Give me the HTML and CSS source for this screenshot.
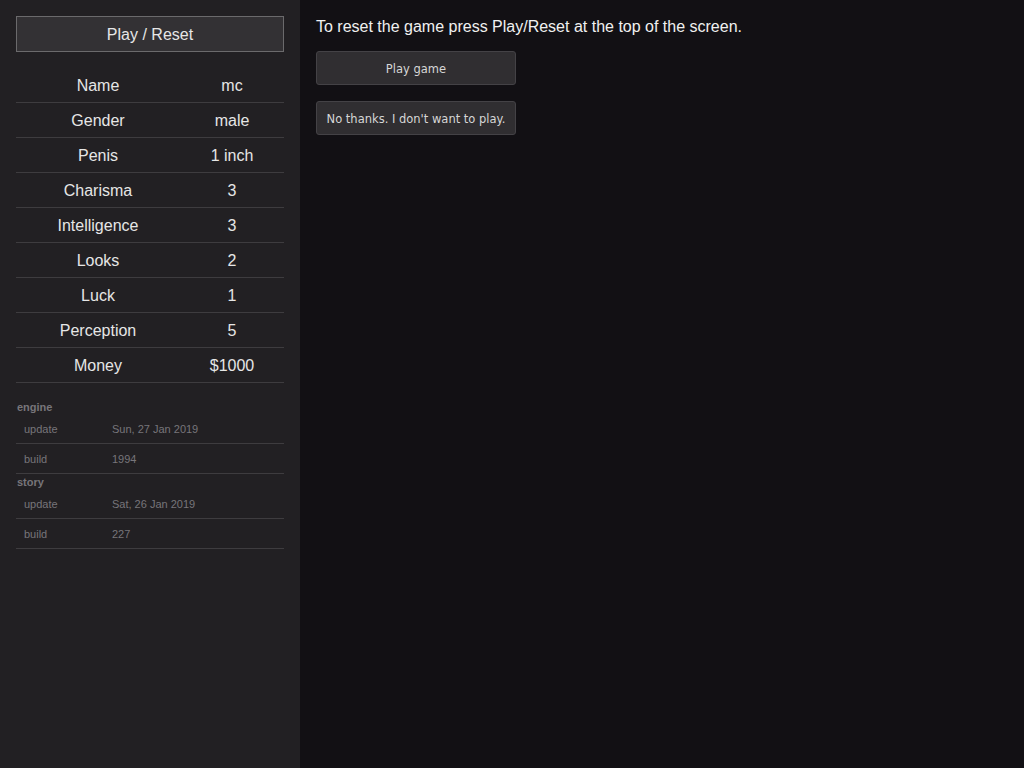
FILE: index.html
```html
<!DOCTYPE html>
<html>
<head>
<meta charset="utf-8">
<link rel="stylesheet" href="styles.css">
</head>
<body>
<div class="layout">
  <aside class="sidebar">
    <button class="reset-btn">Play / Reset</button>
    <table class="stats">
      <tr><td>Name</td><td>mc</td></tr>
      <tr><td>Gender</td><td>male</td></tr>
      <tr><td>Penis</td><td>1 inch</td></tr>
      <tr><td>Charisma</td><td>3</td></tr>
      <tr><td>Intelligence</td><td>3</td></tr>
      <tr><td>Looks</td><td>2</td></tr>
      <tr><td>Luck</td><td>1</td></tr>
      <tr><td>Perception</td><td>5</td></tr>
      <tr><td>Money</td><td>$1000</td></tr>
    </table>
    <div class="info">
      <div class="info-title">engine</div>
      <div class="info-row"><span class="info-key">update</span><span>Sun, 27 Jan 2019</span></div>
      <div class="info-row"><span class="info-key">build</span><span>1994</span></div>
      <div class="info-title second">story</div>
      <div class="info-row"><span class="info-key">update</span><span>Sat, 26 Jan 2019</span></div>
      <div class="info-row"><span class="info-key">build</span><span>227</span></div>
    </div>
  </aside>
  <main class="main">
    <p class="intro">To reset the game press Play/Reset at the top of the screen.</p>
    <button class="choice">Play game</button>
    <button class="choice">No thanks. I don't want to play.</button>
  </main>
</div>
</body>
</html>
```
FILE: styles.css
```css
html, body {
  margin: 0;
  padding: 0;
  height: 100%;
}
body {
  font-family: "Liberation Sans", Arial, sans-serif;
  background: #121014;
  color: #e8e8e8;
}
.layout {
  display: flex;
  height: 768px;
}
.sidebar {
  width: 268px;
  padding: 16px;
  background: #222023;
  flex-shrink: 0;
}
.reset-btn {
  display: block;
  width: 268px;
  height: 36px;
  margin: 0 0 16px 0;
  background: #333134;
  border: 1px solid #6b6a6c;
  color: #e6e6e6;
  font-family: "Liberation Sans", Arial, sans-serif;
  font-size: 16px;
  padding: 2px 0 0 0;
}
.stats {
  width: 268px;
  border-collapse: collapse;
  font-size: 16px;
  color: #e6e6e6;
}
.stats td {
  height: 32px;
  padding: 2px 0 0 0;
  text-align: center;
  border-bottom: 1px solid #3e3c3f;
}
.stats td:first-child {
  width: 164px;
}
.info {
  margin-top: 17px;
  font-size: 11px;
  color: #77757a;
}
.info-title {
  font-weight: bold;
  height: 14px;
  line-height: 14px;
  padding-left: 1px;
}
.info-title.second {
  height: 14px;
  padding-top: 1px;
}
.info-row {
  display: flex;
  height: 28px;
  line-height: 29px;
  padding-top: 1px;
  border-bottom: 1px solid #3e3c3f;
  padding-left: 8px;
}
.info-key {
  width: 88px;
}
.main {
  flex: 1;
  padding: 16px;
}
.intro {
  margin: 0 0 15px 0;
  padding-top: 1px;
  font-size: 16px;
  line-height: 19px;
  color: #f0f0f0;
}
.choice {
  display: block;
  width: 200px;
  height: 34px;
  margin-bottom: 16px;
  background: #302e31;
  border: 1px solid #444246;
  border-radius: 3px;
  color: #d6d6d6;
  font-family: "DejaVu Sans", Verdana, sans-serif;
  font-size: 11.5px;
  padding: 1px 0 0 0;
}
```
